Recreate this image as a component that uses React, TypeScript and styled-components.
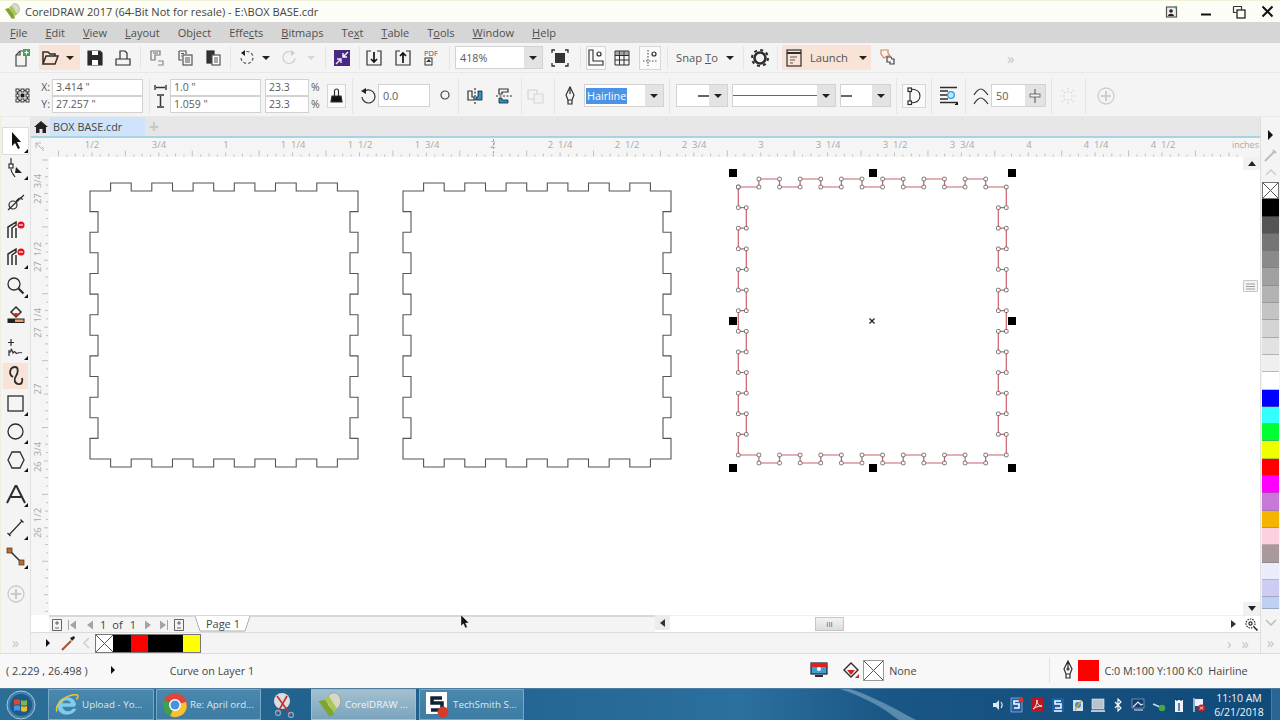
import React from "react";
import styled, { createGlobalStyle } from "styled-components";

const FONT = '"Open Sans", "Noto Sans", "Liberation Sans", sans-serif';

const Global = createGlobalStyle`
  html, body { margin: 0; padding: 0; background: #fff; overflow: hidden; }
  #root { width: 1280px; height: 720px; }
`;

const Page = styled.div`
  width: 1280px; height: 720px; display: flex; flex-direction: column; overflow: hidden;
  font-family: ${FONT}; color: #444; font-size: 11px; background: #f4f4f4; -webkit-font-smoothing: antialiased;
`;
const TitleBar = styled.header`
  height: 22px; flex: none; display: flex; align-items: center; background: #fdfdf7; border-top: 1px solid #f1f2d8; box-sizing: border-box; padding-left: 3px;
`;
const TitleText = styled.span` margin-left: 3px; font-size: 11.05px; color: #444; white-space: nowrap; flex: 1; `;
const WinBtn = styled.div<{ $w: number; $ml?: number }>` width: ${p => p.$w}px; height: 22px; margin-left: ${p => p.$ml ?? 0}px; display: flex; align-items: center; justify-content: center; flex: none; `;
const MenuBar = styled.nav` height: 21px; flex: none; display: flex; align-items: center; background: #d6d6d6; padding-left: 10px; gap: 18px; `;
const MenuItem = styled.span` font-size: 11px; color: #505050; white-space: nowrap; u { text-decoration: underline; text-underline-offset: 1px; } `;
const ToolRow = styled.div<{ $h: number; $pt?: number }>` height: ${p => p.$h}px; flex: none; display: flex; align-items: center; background: #f4f4f4; box-sizing: border-box; padding-top: ${p => p.$pt ?? 0}px; border-bottom: 1px solid #e9e9e9; position: relative; `;
const Grip = styled.div<{ $h?: number; $ml?: number }>`
  width: 5px; height: ${p => p.$h ?? 24}px; margin-left: ${p => p.$ml ?? 0}px; flex: none;
  background-image: radial-gradient(#c4c4c4 40%, transparent 45%); background-size: 2px 2px;
`;
const Slot = styled.div<{ $w?: number; $ml?: number }>`
  width: ${p => p.$w ?? 24}px; margin-left: ${p => p.$ml ?? 0}px; flex: none; display: flex; flex-direction: column; align-items: center; justify-content: center; gap: 3px;
`;
const Boxed = styled(Slot)` height: 24px; box-sizing: border-box; border: 1px solid #d6d6d6; background: #fafafa; `;
const Hot = styled.div<{ $w: number; $ml?: number }>`
  width: ${p => p.$w}px; margin-left: ${p => p.$ml ?? 0}px; height: 25px; flex: none; display: flex; align-items: center; background: #f8e3d6;
`;
const Sep = styled.div<{ $ml?: number }>` width: 1px; align-self: stretch; margin: 3px 0 2px ${p => p.$ml ?? 0}px; background: #e6e6e6; flex: none; `;
const Caret = styled.i<{ $ml?: number; $c?: string }>`
  width: 0; height: 0; flex: none; margin-left: ${p => p.$ml ?? 0}px; border-left: 4px solid transparent; border-right: 4px solid transparent; border-top: 4px solid ${p => p.$c ?? "#222"}; display: block;
`;
const Combo = styled.div<{ $w: number; $ml?: number; $h?: number }>`
  width: ${p => p.$w}px; height: ${p => p.$h ?? 23}px; margin-left: ${p => p.$ml ?? 0}px; flex: none; box-sizing: border-box; display: flex; align-items: center; background: #fff; border: 1px solid #d2d2d2; color: #5a5a5a; font-size: 10.8px;
`;
const ComboBody = styled.div<{ $pad?: number; $end?: boolean }>` flex: 1; min-width: 0; height: 100%; display: flex; align-items: center; padding-left: ${p => p.$pad ?? 4}px; justify-content: ${p => (p.$end ? "flex-end" : "flex-start")}; overflow: hidden; `;
const Drop = styled.div<{ $w?: number }>` width: ${p => p.$w ?? 18}px; height: 100%; flex: none; display: flex; align-items: center; justify-content: center; background: #e3e3e3; `;
const Selected = styled.span` background: #4a93e6; color: #fff; padding: 1px 1px; font-size: 10.8px; line-height: 14px; `;
const LineSample = styled.i<{ $w: number; $t?: number }>` display: block; width: ${p => p.$w}px; height: ${p => p.$t ?? 2}px; background: #666; `;
const Label = styled.span<{ $ml?: number }>` margin-left: ${p => p.$ml ?? 0}px; white-space: nowrap; font-size: 11.2px; color: #555; u { text-decoration: underline; } `;
const Stack = styled.div<{ $ml?: number; $w: number }>` width: ${p => p.$w}px; margin-left: ${p => p.$ml ?? 0}px; flex: none; display: flex; flex-direction: column; `;
const FieldRow = styled.div` display: flex; align-items: center; height: 17px; justify-content: flex-end; `;
const FieldTag = styled.span` margin-right: 2px; color: #555; font-size: 10.5px; `;
const Field = styled.div<{ $w: number }>` width: ${p => p.$w}px; height: 17px; box-sizing: border-box; border: 1px solid #d2d2d2; background: #fff; padding-left: 3px; font-size: 10.5px; line-height: 15px; color: #5a5a5a; flex: none; `;
const PctTag = styled.span` height: 17px; line-height: 17px; color: #5a5a5a; font-size: 10.5px; `;

const Workspace = styled.div` flex: none; height: 536px; display: flex; `;
const Toolbox = styled.aside`
  width: 31px; flex: none; box-sizing: border-box; display: flex; flex-direction: column; align-items: center; background: #f4f4f4; border-right: 1px solid #e2e2e2; border-left: 1px solid #eef0dc;
`;
const TopGrip = styled.div<{ $w: number }>`
  width: ${p => p.$w}px; height: 5px; margin-top: 2px; flex: none; background-image: radial-gradient(#c8c8c8 40%, transparent 45%); background-size: 2px 2px;
`;
const ToolSlot = styled.div<{ $mt: number; $on?: boolean; $sel?: boolean; $corner?: boolean }>`
  width: 25px; height: 26px; flex: none; margin-top: ${p => p.$mt}px; position: relative; display: flex; align-items: center; justify-content: center;
  background: ${p => (p.$on ? "#f8e3d6" : p.$sel ? "#fff" : "transparent")};
  box-shadow: ${p => (p.$sel ? "0 0 0 1px #dcdcdc" : "none")};
  &::after { content: ""; display: ${p => (p.$corner ? "block" : "none")}; position: absolute; right: 0; bottom: 1px; border-left: 4px solid transparent; border-bottom: 4px solid #111; }
`;
const BottomChev = styled.div` margin-top: auto; margin-bottom: 4px; height: 12px; color: #c4c4c4; font-size: 14px; line-height: 12px; `;
const Center = styled.section` width: 1229px; flex: none; display: flex; flex-direction: column; `;
const TabBar = styled.div` height: 19px; flex: none; display: flex; align-items: center; background: #e6e6e6; `;
const HomeCell = styled.div` width: 19px; flex: none; display: flex; justify-content: center; `;
const DocTab = styled.div` width: 95px; height: 19px; line-height: 19px; background: #cfe4fa; padding-left: 3px; box-sizing: border-box; font-size: 10.8px; color: #444; `;
const AddTab = styled.span` margin-left: 4px; font-size: 17px; line-height: 17px; color: #c8c8c8; font-weight: 700; `;
const RulerTop = styled.div` height: 21px; flex: none; border-top: 2px solid #a8d3e6; box-sizing: border-box; background: #f5f5f5; `;
const CanvasRow = styled.div` height: 458px; flex: none; display: flex; `;
const RulerLeft = styled.div` width: 18px; flex: none; background: #f5f5f5; `;
const Canvas = styled.div` width: 1194px; flex: none; background: #fff; `;
const VScroll = styled.div` width: 17px; flex: none; background: #fff; display: flex; flex-direction: column; align-items: stretch; `;
const ScrollBtn = styled.div<{ $mt?: number }>` height: 13px; margin-top: ${p => p.$mt ?? 0}px; background: #f1f1f1; display: flex; align-items: center; justify-content: center; flex: none; `;
const SideHandle = styled.div` height: 12px; width: 15px; margin-top: 110px; box-sizing: border-box; border: 1px solid #c8c8c8; border-radius: 1px; background: #f3f3f3; display: flex; align-items: center; justify-content: center; flex: none; `;
const HBar = styled.div` height: 17px; flex: none; display: flex; background: #fff; `;
const HGap = styled.div` width: 18px; flex: none; background: #fff; `;
const PageCtl = styled.div` width: 606px; flex: none; display: flex; align-items: center; background: #f4f4f4; border-top: 2px solid #d8d8d8; box-sizing: border-box; position: relative; `;
const PageNum = styled.span<{ $ml: number }>` margin-left: ${p => p.$ml}px; font-size: 11px; color: #444; flex: none; `;
const PageTab = styled.div`
  width: 56px; height: 15px; margin-left: 10px; margin-top: -2px; flex: none; position: relative; display: flex; align-items: center; justify-content: center; font-size: 11px; color: #444;
  svg { position: absolute; left: 0; top: 0; }
  span { position: relative; }
`;
const Pointer = styled.svg` position: absolute; left: 412px; top: -2px; z-index: 2; `;
const MiniGrip = styled(Grip)` margin-left: auto; height: 15px; `;
const ArrowCell = styled.div` width: 15px; height: 15px; flex: none; background: #ececec; display: flex; align-items: center; justify-content: center; `;
const HTrack = styled.div` flex: 1; display: flex; align-items: center; border-top: 1px solid #eee; box-sizing: border-box; `;
const Thumb = styled.div` width: 29px; height: 14px; margin-left: 145px; box-sizing: border-box; border: 1px solid #c6c6c6; background: linear-gradient(#f3f3f3, #dcdcdc); color: #666; font-size: 8px; line-height: 11px; text-align: center; flex: none; `;
const HEnd = styled.div` margin-left: auto; display: flex; align-items: center; gap: 8px; padding-right: 2px; `;
const DocPalette = styled.div` height: 21px; flex: none; display: flex; align-items: center; background: #f4f4f4; border-top: 1px solid #dcdcdc; box-sizing: border-box; `;
const Swatch = styled.div<{ $c: string }>` width: 17.4px; height: 17px; background: ${p => p.$c}; flex: none; box-sizing: border-box; `;
const SwatchRow = styled.div` display: flex; margin-left: 3px; border: 1px solid #777; box-sizing: border-box; `;
const Chev = styled.span<{ $ml?: number; $mr?: number; $auto?: boolean }>` color: #c4c4c4; font-size: 15px; line-height: 14px; margin-left: ${p => (p.$auto ? "auto" : `${p.$ml ?? 0}px`)}; margin-right: ${p => p.$mr ?? 0}px; flex: none; `;
const Palette = styled.aside` width: 20px; flex: none; box-sizing: border-box; display: flex; flex-direction: column; align-items: center; background: #f4f4f4; border-left: 1px solid #dedede; `;
const PalBtn = styled.div<{ $mt?: number }>` height: 14px; margin-top: ${p => p.$mt ?? 0}px; display: flex; align-items: center; justify-content: center; flex: none; `;
const ColorList = styled.div` width: 17px; margin-top: 3px; flex: none; display: flex; flex-direction: column; `;
const Color = styled.div<{ $c: string; $cut?: boolean; $framed?: boolean }>`
  width: 17px; height: ${p => (p.$cut ? 12 : 17.3)}px; flex: none; background: ${p => p.$c}; box-sizing: border-box;
  border: ${p => (p.$framed ? "1px solid #777" : "none")}; ${p => (p.$framed ? "" : "border-bottom: 1px solid rgba(120,120,120,.45);")}
`;
const StatusBar = styled.footer` height: 35px; flex: none; display: flex; align-items: center; background: #f8f8f8; border-top: 1px solid #dedede; box-sizing: border-box; padding: 0 0 2px 6px; `;
const StatusText = styled.span<{ $ml?: number }>` font-size: 10.8px; color: #444; white-space: nowrap; margin-left: ${p => p.$ml ?? 0}px; flex: none; `;
const PlayMark = styled.i<{ $ml?: number; $c?: string; $s?: number }>`
  width: 0; height: 0; flex: none; display: block; margin-left: ${p => p.$ml ?? 0}px; border-top: ${p => p.$s ?? 4}px solid transparent; border-bottom: ${p => p.$s ?? 4}px solid transparent; border-left: ${p => p.$s ?? 4}px solid ${p => p.$c ?? "#111"};
`;
const BigBox = styled.div<{ $c?: string; $ml?: number }>` width: 21px; height: 21px; margin-left: ${p => p.$ml ?? 0}px; flex: none; background: ${p => p.$c ?? "#fff"}; border: ${p => (p.$c ? "none" : "1px solid #999")}; box-sizing: border-box; display: flex; `;
const StatusSep = styled.div<{ $ml: number }>` width: 1px; height: 26px; margin-left: ${p => p.$ml}px; background: #e2e2e2; flex: none; `;
const Taskbar = styled.div`
  height: 32px; flex: none; display: flex; align-items: center; position: relative; overflow: hidden; border-top: 1px solid #4e7c9e; box-sizing: border-box;
  background: linear-gradient(90deg, #2b6f98 0%, #205f8c 30%, #2b709f 58%, #195585 70%, #104a78 100%);
`;
const Swoosh = styled.svg` position: absolute; left: 800px; top: 0; `;
const Orb = styled.div` width: 38px; height: 31px; flex: none; margin: 0 8px 0 2px; display: flex; align-items: center; justify-content: center; position: relative; `;
const TaskBtn = styled.div<{ $w: number; $ml?: number; $on?: boolean }>`
  width: ${p => p.$w}px; height: 31px; margin-left: ${p => p.$ml ?? 0}px; flex: none; box-sizing: border-box; display: flex; align-items: center; position: relative; gap: 2px; padding-left: 5px;
  border: 1px solid rgba(170,205,225,.5); color: ${p => (p.$on ? "#eef5f9" : "#dbe9f1")}; font-size: 9.8px; white-space: nowrap;
  background: ${p => (p.$on ? "linear-gradient(#a4c0d0, #7aa4bd)" : "linear-gradient(#4a88ad, #3d7ca3)")};
`;
const Tray = styled.div` margin-left: auto; display: flex; align-items: center; position: relative; `;
const TrayIcon = styled.div` width: 20.2px; display: flex; justify-content: center; flex: none; `;
const Clock = styled.div` width: 60px; text-align: center; color: #f2f6fa; font-size: 10.5px; line-height: 14px; flex: none; `;
const ShowDesk = styled.div` width: 8px; height: 31px; margin-left: 2px; border-left: 1px solid #4e7c9e; background: #2a6695; flex: none; `;

/* ---- drawings ---- */
type SP = { w?: number; h?: number; children?: React.ReactNode };
const S = ({ w = 20, h = 20, children }: SP) => (
  <svg width={w} height={h} viewBox={`0 0 ${w} ${h}`} fill="none" stroke="#2d2d2d" strokeWidth={1.2} style={{ display: "block", flex: "none" }}>{children}</svg>
);

const SEG = 268 / 13;
function boxPoints(x: number, y: number): [number, number][] {
  const pts: [number, number][] = [[x, y + 8]];
  for (let i = 0; i < 13; i++) { const yy = i % 2 ? y : y + 8; if (i) pts.push([x + i * SEG, yy]); pts.push([x + (i + 1) * SEG, yy]); }
  for (let i = 0; i < 13; i++) { const xx = i % 2 ? x + 260 : x + 268; if (i) pts.push([xx, y + 8 + i * SEG]); pts.push([xx, y + 8 + (i + 1) * SEG]); }
  for (let i = 0; i < 13; i++) { const yy = i % 2 ? y + 284 : y + 276; const a = x + 268 - i * SEG; if (i) pts.push([a, yy]); pts.push([a - SEG, yy]); }
  for (let i = 0; i < 13; i++) { const xx = i % 2 ? x + 8 : x; const a = y + 276 - i * SEG; if (i) pts.push([xx, a]); pts.push([xx, a - SEG]); }
  return pts;
}
const toD = (p: [number, number][]) => "M" + p.map(q => `${q[0].toFixed(1)} ${q[1].toFixed(1)}`).join("L") + "Z";

const CanvasArt = () => {
  const third = boxPoints(738.3, 179);
  const handles: [number, number][] = [[733, 173], [873, 173], [1012, 173], [733, 321], [1012, 321], [733, 468], [873, 468], [1012, 468]];
  return (
    <svg width={1194} height={458} style={{ display: "block" }}>
      <g transform="translate(-49 -157)" fill="none">
        <path d={toD(boxPoints(90, 183))} stroke="#555" strokeWidth={1.1} />
        <path d={toD(boxPoints(403, 183))} stroke="#555" strokeWidth={1.1} />
        <path d={toD(third)} stroke="#c9606c" strokeWidth={1.2} />
        {third.map((p, i) => <rect key={i} x={p[0] - 1.8} y={p[1] - 1.8} width={3.6} height={3.6} rx={1} fill="#fff" stroke="#555" strokeWidth={0.8} />)}
        {handles.map((p, i) => <rect key={i} x={p[0] - 4} y={p[1] - 4} width={8} height={8} fill="#000" />)}
        <path d="M869.500 318.500l5 5M874.500 318.500l-5 5" stroke="#222" strokeWidth={1.3} />
      </g>
    </svg>
  );
};

const hLabels: [number, string][] = [[92, "1/2"], [159, "3/4"], [226, "1"], [293, "1  1/4"], [360, "1  1/2"], [427, "1  3/4"], [493, "2"], [560, "2  1/4"], [627, "2  1/2"], [694, "2  3/4"], [761, "3"], [828, "3  1/4"], [895, "3  1/2"], [962, "3  3/4"], [1029, "4"], [1096, "4  1/4"], [1163, "4  1/2"]];
const tickLen = (i: number) => (i % 8 === 0 ? 6 : i % 4 === 0 ? 4 : i % 2 === 0 ? 3 : 2);
const HRuler = () => {
  const ticks: React.ReactNode[] = [];
  for (let i = 0; i < 148; i++) {
    const x = 58.5 + i * 8.36 - 31;
    if (x > 18 && x < 1212) ticks.push(<line key={i} x1={x} x2={x} y1={18.500} y2={18.500 - tickLen(i)} stroke="#b4b4b4" strokeWidth={0.8} />);
  }
  return (
    <svg width={1229} height={19} style={{ display: "block" }}>
      <g transform="translate(9 9)" stroke="#a4a4a4" strokeWidth={0.8}><path d="M-4-4h5M-4-4v5M-4-4l8 8M2 0l2 2" /></g>
      {ticks}
      <path d="M462.500 1v17" stroke="#888" strokeDasharray="2 2" strokeWidth={0.7} />
      {hLabels.map(([x, t]) => <text key={x} x={x - 31} y={9.500} fontSize={9.500} fill="#a8a8a8" textAnchor="middle" xmlSpace="preserve" fontFamily={FONT} stroke="none">{t}</text>)}
      <text x={1201} y={10} fontSize={9} fill="#a8a8a8" fontFamily={FONT}>inches</text>
    </svg>
  );
};
const vLabels: [number, string][] = [[189, "27  3/4"], [257, "27  1/2"], [323, "27  1/4"], [389, "27"], [457, "26  3/4"], [523, "26  1/2"]];
const VRuler = () => {
  const ticks: React.ReactNode[] = [];
  for (let i = 0; i < 56; i++) {
    const y = 3 + i * 8.36;
    ticks.push(<line key={i} y1={y} y2={y} x1={17} x2={17 - tickLen(i)} stroke="#b4b4b4" strokeWidth={0.8} />);
  }
  return (
    <svg width={18} height={458} style={{ display: "block" }}>
      {ticks}
      {vLabels.map(([y, t]) => <text key={y} transform={`translate(10 ${y - 157}) rotate(-90)`} fontSize={9.500} fill="#a8a8a8" textAnchor="middle" xmlSpace="preserve" fontFamily={FONT}>{t}</text>)}
    </svg>
  );
};

const CorelLogo = ({ s = 17 }: { s?: number }) => (
  <svg width={s} height={s} viewBox="0 0 17 17" style={{ display: "block", flex: "none" }}>
    <ellipse cx="11" cy="6" rx="4.500" ry="5.500" fill="#d8d8c8" stroke="#9a9a8a" strokeWidth=".5" />
    <path d="M1 6l7 10 3-1-1-3-5-7z" fill="#7ea52c" />
    <path d="M5 4l6 9 2-2-5-8z" fill="#a8c850" />
  </svg>
);

const Fan = () => <S w={20} h={20}><path d="M2 18V7l8-5v3l-4 3v10M6 18V9M10 18V8" strokeWidth={1.500} /><circle cx="15" cy="5" r="3.500" fill="#e01020" stroke="none" /><path d="M13 5h4" stroke="#fff" /></S>;

const tools: { mt: number; on?: boolean; sel?: boolean; corner?: boolean; art: React.ReactNode }[] = [
  { mt: 4, sel: true, corner: true, art: <S w={20} h={20}><path d="M6 1l0 14 3-3 3 6 2-1-3-6 4 0z" fill="#111" stroke="none" /></S> },
  { mt: 1, corner: true, art: <S w={20} h={22}><path d="M5 1v6M5 12c0 4 3 6 4 8" /><rect x="3" y="7" width="4" height="4" fill="#fff" /><path d="M10 10l6 6-7 0z" fill="#222" stroke="none" /></S> },
  { mt: 8, art: <S w={20} h={20}><circle cx="7" cy="13" r="4" /><path d="M2 18L18 3M10 9c2-1 2-3 4-3s1 2 3 1" /></S> },
  { mt: 2, art: <Fan /> },
  { mt: 1, corner: true, art: <Fan /> },
  { mt: 3, corner: true, art: <S w={20} h={20}><circle cx="8" cy="8" r="6" strokeWidth={1.300} /><path d="M12.500 12.500l5 5" strokeWidth={2.200} /></S> },
  { mt: 3, art: <S w={20} h={20}><path d="M10 2l5 5-5 5-5-5z" strokeWidth={1.500} /><path d="M6 9l4 3 4-3-4-1z" fill="#b83010" stroke="none" /><rect x="2" y="14" width="16" height="3.500" fill="#e8a070" stroke="#222" strokeWidth={1} /><path d="M2 14h7v3.500H2z" fill="#222" stroke="none" /></S> },
  { mt: 7, corner: true, art: <S w={20} h={20}><path d="M5 1v7M2 4.500h6M3 18v-6c0 3 2 3 2 0s2 3 2 3 1-2 2-1 1 2 3 1 2-1 4 0" /></S> },
  { mt: 2, on: true, art: <S w={20} h={22}><path d="M7 12C2 9 4 2 9 2c4 0 3 6 1 9s-2 7 2 8 5-3 4-6" strokeWidth={1.800} /></S> },
  { mt: 2, corner: true, art: <S w={20} h={20}><rect x="2" y="2" width="15" height="15" strokeWidth={1.300} /></S> },
  { mt: 2, corner: true, art: <S w={20} h={20}><circle cx="9.500" cy="9.500" r="7.500" strokeWidth={1.300} /></S> },
  { mt: 2, corner: true, art: <S w={20} h={20}><path d="M6 2h8l4 8-4 8H6l-4-8z" strokeWidth={1.300} /></S> },
  { mt: 9, corner: true, art: <S w={22} h={22}><path d="M2 19L10.500 2h1L20 19M6 13h10" strokeWidth={2} /></S> },
  { mt: 7, corner: true, art: <S w={20} h={20}><path d="M3 17L16 3M1.500 15l3 3M14.500 1.500l3 3" /></S> },
  { mt: 3, corner: true, art: <S w={20} h={20}><path d="M4 4l12 12" strokeWidth={1.500} /><rect x="1" y="1" width="5" height="5" fill="#c46a24" stroke="#333" strokeWidth={.7} /><rect x="13" y="13" width="5" height="5" fill="#c46a24" stroke="#333" strokeWidth={.7} /></S> },
  { mt: 11, art: <S w={20} h={20}><circle cx="10" cy="10" r="8" stroke="#c8c8c8" strokeWidth={1.300} /><path d="M10 5v10M5 10h10" stroke="#c8c8c8" strokeWidth={2} /></S> },
];

const paletteColors = ["#000", "#555", "#757575", "#8a8a8a", "#a0a0a0", "#b3b3b3", "#c4c4c4", "#d4d4d4", "#e2e2e2", "#efefef", "#fff", "#0000ff", "#33ffff", "#00ff33", "#eeff00", "#ff0000", "#ff00ff", "#c878d8", "#f5b400", "#fdd0e0", "#a89a9a", "#ebebfb", "#ccccf4"];

const CrossFill = ({ w, h }: { w: number; h: number }) => (
  <svg width={w} height={h} style={{ display: "block" }}><path d={`M0 0L${w} ${h}M${w} 0L0 ${h}`} stroke="#555" strokeWidth={1} /></svg>
);
const PenIcon = () => <S w={12} h={20}><path d="M6 1l-4 8 2 5h4l2-5zM6 1v7M4 14v4h4v-4" /><circle cx="6" cy="9" r="1" /></S>;
const AddPage = () => <S w={12} h={14}><path d="M1.500 1.500h9v11h-9zM4 5h4M6 3v4M4 10h4" stroke="#555" strokeWidth={.9} /></S>;
const Tri = ({ d, c = "#a4a4a4", bar }: { d: "l" | "r"; c?: string; bar?: boolean }) => (
  <svg width={12} height={12} style={{ display: "block", flex: "none" }}>
    <path d={d === "l" ? "M9 1.500L3 6l6 4.500z" : "M3 1.500L9 6l-6 4.500z"} fill={c} />
    {bar && <path d={d === "l" ? "M1.500 1v10" : "M10.500 1v10"} stroke={c} />}
  </svg>
);
const TinyCaret = ({ up, c = "#222" }: { up?: boolean; c?: string }) => (
  <svg width={8} height={5} style={{ display: "block" }}><path d={up ? "M0 5L4 0l4 5z" : "M0 0L8 0 4 5z"} fill={c} /></svg>
);
const OriginIcon = () => (
  <S w={15} h={17}>
    <g strokeWidth={.9} stroke="#222">
      {[1, 6, 11].map(y => [1, 6, 11].map(x => <rect key={`${x}-${y}`} x={x} y={y + 1} width={3} height={3} fill={x === 6 && y === 6 ? "#111" : "#fff"} />))}
      <path d="M4 3.500h2M9 3.500h2M4 13.500h2M9 13.500h2M2.500 5v2M12.500 5v2M2.500 10v2M12.500 10v2" />
    </g>
  </S>
);

const TrayArt = [
  <S w={14} h={14} key="a"><path d="M3 5h3l3-3v10L6 9H3z" fill="#dfe8ef" stroke="none" /><path d="M11 4c1.500 2 1.500 4 0 6" stroke="#dfe8ef" /></S>,
  <S w={14} h={16} key="b"><rect x="1" y="1" width="11" height="14" fill="#1b5fa8" stroke="#dfe8ef" strokeWidth=".5" /><path d="M9 4H4v3h5v4H4" stroke="#fff" strokeWidth={1.600} /><circle cx="11" cy="3" r="2.500" fill="#e03030" stroke="none" /></S>,
  <S w={14} h={16} key="c"><rect x="1" y="1" width="12" height="14" fill="#b81820" stroke="none" /><path d="M3 12c3-2 4-6 4-9 0 4 2 6 5 6-4 0-6 1-9 3z" stroke="#fff" strokeWidth=".9" /></S>,
  <S w={14} h={16} key="d"><rect x="1" y="1" width="12" height="14" fill="#1b5fa8" stroke="none" /><path d="M10 4H4v3h6v4H4M3 14h8" stroke="#fff" strokeWidth={1.500} /></S>,
  <S w={14} h={16} key="e"><path d="M2 3h8l2 2v9H2z" fill="#cfe0ee" stroke="none" /><circle cx="7" cy="8" r="3" fill="#3e8ed0" stroke="none" /><path d="M4 13l6-9" stroke="#d8a030" strokeWidth={1.500} /></S>,
  <S w={16} h={16} key="f"><rect x="2" y="2" width="12" height="10" fill="#b8c4cc" stroke="#eef" strokeWidth=".6" /><path d="M1 14h14" stroke="#eef" strokeWidth={1.500} /></S>,
  <S w={10} h={14} key="g"><path d="M2 4l6 6-3 3V1l3 3-6 6" stroke="#fff" strokeWidth={1.100} /></S>,
  <S w={16} h={14} key="h"><rect x="2" y="1" width="12" height="9" fill="#123a70" stroke="#ccd" strokeWidth=".5" /><path d="M3 9l5-5 3 3 2-1M4 12h9" stroke="#dfe8ef" /></S>,
  <S w={16} h={14} key="i"><path d="M2 6l7 3" stroke="#cdd" strokeWidth={1.600} /><circle cx="11" cy="10" r="3.200" fill="#45a845" stroke="none" /></S>,
  <S w={14} h={16} key="j"><path d="M3 3h8v12H3z" fill="#eef2f5" stroke="none" /><path d="M5 1v3M9 1v3M7 6v8" stroke="#123a70" strokeWidth={1.200} /></S>,
  <S w={14} h={16} key="k"><path d="M2 1v14" stroke="#eef" /><path d="M3 2h8v7H3z" fill="#eef" stroke="none" /><circle cx="9.500" cy="11" r="3.500" fill="#c82020" stroke="none" /><path d="M8 9.500l3 3m0-3l-3 3" stroke="#fff" strokeWidth=".9" /></S>,
];

export default function App() {
  return (
    <Page>
      <Global />
      <TitleBar>
        <Slot $w={19}><CorelLogo /></Slot>
        <TitleText>CorelDRAW 2017 (64-Bit Not for resale) - E:\BOX BASE.cdr</TitleText>
        <WinBtn $w={20}><S w={14} h={14}><rect x="1.500" y="2" width="10" height="10" fill="#eee" stroke="#555" /><circle cx="6" cy="6" r="1.800" fill="#222" stroke="none" /><path d="M3 11c0-3 6-3 6 0" fill="#222" stroke="none" /><path d="M11 1v3" stroke="#3aa040" /></S></WinBtn>
        <WinBtn $w={20} $ml={14}><S w={12} h={10}><path d="M1 7.500h10" strokeWidth={2} stroke="#111" /></S></WinBtn>
        <WinBtn $w={20} $ml={13}><S w={14} h={14}><path d="M1.500 1.500h8v3M1.500 1.500v6h3" stroke="#333" /><rect x="5" y="5" width="8" height="8" stroke="#111" /></S></WinBtn>
        <WinBtn $w={20} $ml={8}><S w={13} h={13}><path d="M1.500 1.500l10 10M11.500 1.500l-10 10" stroke="#111" strokeWidth={2} /></S></WinBtn>
        <WinBtn $w={3} />
      </TitleBar>
      <MenuBar>
        <MenuItem><u>F</u>ile</MenuItem><MenuItem><u>E</u>dit</MenuItem><MenuItem><u>V</u>iew</MenuItem><MenuItem><u>L</u>ayout</MenuItem>
        <MenuItem>Ob<u>j</u>ect</MenuItem><MenuItem>Effe<u>c</u>ts</MenuItem><MenuItem><u>B</u>itmaps</MenuItem><MenuItem>Te<u>x</u>t</MenuItem>
        <MenuItem><u>T</u>able</MenuItem><MenuItem>T<u>o</u>ols</MenuItem><MenuItem><u>W</u>indow</MenuItem><MenuItem><u>H</u>elp</MenuItem>
      </MenuBar>
      <ToolRow $h={30}>
        <Grip />
        <Slot $ml={5}><S w={20} h={20}><path d="M4 18V7l4-4h6v15z" stroke="#444" /><path d="M8 3v4H4" stroke="#444" /><rect x="11" y="1" width="7" height="7" fill="#3aa850" stroke="none" /><path d="M14.500 2.500v4M12.500 4.500h4" stroke="#fff" strokeWidth={1.200} /></S></Slot>
        <Hot $w={41} $ml={5}>
          <Slot $w={22}><S w={18} h={18}><path d="M2 15V3h5l2 2h5v2M2 15L5 7h12l-3 8z" strokeWidth={1.500} /></S></Slot>
          <Caret $ml={5} />
        </Hot>
        <Slot $ml={3}><S w={18} h={18}><path d="M2 2h12l2 2v12H2z" fill="#2a2a2a" /><rect x="6" y="2" width="6" height="4" fill="#fff" stroke="none" /><rect x="6" y="11" width="6" height="5" fill="#fff" stroke="none" /></S></Slot>
        <Slot $ml={4}><S w={20} h={20}><path d="M7 11V3h5l2 2v6M3 11h14v6H3z" strokeWidth={1.200} /></S></Slot>
        <Sep $ml={5} />
        <Slot $ml={4}><S w={18} h={18}><path d="M3 2h9v4H7v5H3z" stroke="#777" /><path d="M5 4h5" stroke="#777" /><path d="M10 12h5v4h-5" stroke="#888" /></S></Slot>
        <Slot $ml={4}><S w={18} h={18}><path d="M3 2h7v3M3 2v9h3M5 4.500h3M5 7h1" stroke="#555" /><rect x="7" y="6" width="9" height="10" stroke="#555" /><path d="M9 9h5M9 11h5M9 13h5" stroke="#555" /></S></Slot>
        <Slot $ml={4}><S w={18} h={18}><rect x="3" y="2" width="7" height="12" fill="#333" /><rect x="8" y="6" width="8" height="10" fill="#fff" stroke="#555" /><path d="M10 9h4M10 11h4M10 13h4" stroke="#555" /></S></Slot>
        <Sep $ml={5} />
        <Slot $ml={3}><S w={18} h={18}><path d="M4 9a6 6 0 1 0 2-5" strokeDasharray="3 2" stroke="#555" /><path d="M8 1L4 4l4 3z" fill="#222" stroke="none" /></S></Slot>
        <Slot $ml={2} $w={12}><Caret /></Slot>
        <Slot $ml={6}><S w={18} h={18}><path d="M14 9a6 6 0 1 1-2-5" stroke="#ccc" /><path d="M10 1l4 3-4 3z" fill="#ccc" stroke="none" /></S></Slot>
        <Slot $ml={3} $w={12}><Caret $c="#d6d6d6" /></Slot>
        <Sep $ml={8} />
        <Slot $ml={4}><S w={18} h={18}><rect x="1" y="1" width="16" height="16" fill="#4a2a80" stroke="none" /><path d="M15 3L10 8M10 4v4h4" stroke="#fff" strokeWidth={1.400} /><path d="M3 15l5-5M4 10h4v4" stroke="#f0e8f8" strokeWidth={1.400} /></S></Slot>
        <Sep $ml={5} />
        <Slot $ml={2}><S w={18} h={18}><path d="M6 2H2v14h14V2h-4" stroke="#333" /><path d="M9 3v10M6 10l3 3 3-3" strokeWidth={1.700} stroke="#111" /></S></Slot>
        <Slot $ml={5}><S w={18} h={18}><path d="M6 2H2v14h14V2h-4" stroke="#333" /><path d="M9 14V4M6 7l3-3 3 3" strokeWidth={1.700} stroke="#111" /></S></Slot>
        <Slot $ml={5}><svg width={18} height={20} style={{ display: "block" }}><text x={1} y={8} fontSize={7.500} fill="#555" fontFamily={FONT}>PDF</text><rect x="2" y="10" width="7" height="7" fill="none" stroke="#333" /><path d="M3 14l3-3 2 3z" fill="#333" /></svg></Slot>
        <Sep $ml={5} />
        <Combo $w={88} $ml={5}><ComboBody>418%</ComboBody><Drop><Caret /></Drop></Combo>
        <Slot $ml={5}><S w={20} h={20}><rect x="5" y="5" width="10" height="10" fill="#333" stroke="none" /><path d="M2 5V2h3M15 2h3v3M18 15v3h-3M5 18H2v-3" strokeWidth={1.300} /></S></Slot>
        <Sep $ml={8} />
        <Boxed $w={20} $ml={5}><S w={18} h={20}><path d="M2 2v15h14v-4H6V2z" strokeWidth={1.100} /><circle cx="12" cy="6" r="2" /></S></Boxed>
        <Slot $ml={4}><S w={18} h={18}><path d="M2 2h14v14H2zM6.500 2v14M11 2v14M2 6.500h14M2 11h14" strokeWidth={1} /><rect x="2" y="2" width="14" height="4" fill="#555" stroke="none" opacity=".5" /></S></Slot>
        <Boxed $w={22} $ml={5}><S w={18} h={20}><path d="M7 2v16M2 13h14" strokeDasharray="1.500 1.500" stroke="#555" /><circle cx="13" cy="6" r="2" /></S></Boxed>
        <Sep $ml={6} />
        <Label $ml={8}>Snap <u>T</u>o</Label>
        <Caret $ml={8} />
        <Sep $ml={9} />
        <Slot $ml={4}><S w={20} h={20}><circle cx="10" cy="10" r="5.500" strokeWidth={2.600} /><circle cx="10" cy="10" r="8" strokeWidth={2} strokeDasharray="3 3.280" /></S></Slot>
        <Sep $ml={5} />
        <Hot $w={89} $ml={4}>
          <Slot $w={24}><S w={18} h={20}><rect x="2" y="2" width="14" height="16" /><path d="M2 5h14" strokeWidth={2} /><path d="M5 9h7M5 12h5M5 15h3" stroke="#555" /></S></Slot>
          <Label $ml={4}>Launch</Label>
          <Caret $ml={11} />
        </Hot>
        <Slot $ml={4}><S w={18} h={20}><path d="M3 2h7v3l2 3H9L6 10 3 6z" stroke="#e08050" /><path d="M9 9h4l1 2 2 0v5h-4v-2H9z" stroke="#444" /></S></Slot>
        <Chev $ml={108}>»</Chev>
      </ToolRow>
      <ToolRow $h={44} $pt={2}>
        <Grip $h={38} />
        <Slot $w={16} $ml={9}><OriginIcon /></Slot>
        <Stack $w={105} $ml={8}>
          <FieldRow><FieldTag>X:</FieldTag><Field $w={91}>3.414 "</Field></FieldRow>
          <FieldRow><FieldTag>Y:</FieldTag><Field $w={91}>27.257 "</Field></FieldRow>
        </Stack>
        <Sep $ml={6} />
        <Slot $w={13} $ml={4}>
          <S w={13} h={7}><path d="M1 1v5M12 1v5M2 3.500h9" stroke="#333" strokeWidth={1.400} /></S>
          <S w={11} h={14}><path d="M2 1h7M2 13h7M5.500 2v10" stroke="#333" strokeWidth={1.500} /></S>
        </Slot>
        <Stack $w={91} $ml={3}><Field $w={91}>1.0 "</Field><Field $w={91}>1.059 "</Field></Stack>
        <Stack $w={44} $ml={4}><Field $w={44}>23.3</Field><Field $w={44}>23.3</Field></Stack>
        <Stack $w={13} $ml={2}><PctTag>%</PctTag><PctTag>%</PctTag></Stack>
        <Boxed $w={19} $ml={3}><S w={13} h={18}><path d="M4.500 9V4a2 2 0 0 1 4 0v5" /><path d="M2 9h9l1 6H1z" fill="#111" /></S></Boxed>
        <Sep $ml={6} />
        <Slot $w={18} $ml={6}><S w={18} h={18}><path d="M6 4a6.500 6.500 0 1 1-3 6" stroke="#333" /><path d="M7 1v6L2 4z" fill="#222" stroke="none" /></S></Slot>
        <Combo $w={52} $ml={1}><ComboBody>0.0</ComboBody></Combo>
        <Slot $w={18} $ml={6}><S w={12} h={12}><circle cx="6" cy="5" r="4" stroke="#444" /></S></Slot>
        <Sep $ml={4} />
        <Slot $ml={4}><S w={18} h={18}><path d="M2 4h4v6h2v3H2z" stroke="#333" /><path d="M9 1v16" strokeDasharray="2 1.500" /><path d="M16 4h-4v6h-2v3h6z" fill="#2e93bf" stroke="#123" strokeWidth=".8" /></S></Slot>
        <Slot $ml={5}><S w={18} h={18}><path d="M4 2h9v3H7v2H4z" stroke="#333" /><path d="M1 9h16" strokeDasharray="2 1.500" /><path d="M4 16h9v-3H7v-2H4z" fill="#2e93bf" stroke="#123" strokeWidth=".8" /></S></Slot>
        <Sep $ml={5} />
        <Slot $ml={2}><S w={18} h={18}><path d="M1 3h9v9H1z" stroke="#d2d2d2" /><path d="M7 7h9v9H7z" stroke="#d8d8d8" fill="#f1f1f1" /></S></Slot>
        <Sep $ml={6} />
        <Slot $ml={3}><S w={12} h={20}><path d="M6 1l-4 8 2 5h4l2-5z" stroke="#333" /><path d="M6 1v7M4 14v4h4v-4" /></S></Slot>
        <Combo $w={80} $ml={2}><ComboBody $pad={1}><Selected>Hairline</Selected></ComboBody><Drop><Caret /></Drop></Combo>
        <Sep $ml={5} />
        <Combo $w={52} $ml={6}><ComboBody $end><LineSample $w={11} /></ComboBody><Drop><Caret /></Drop></Combo>
        <Combo $w={104} $ml={4}><ComboBody $pad={0}><LineSample $w={85} $t={1} /></ComboBody><Drop><Caret /></Drop></Combo>
        <Combo $w={51} $ml={4}><ComboBody $pad={0}><LineSample $w={11} /></ComboBody><Drop><Caret /></Drop></Combo>
        <Sep $ml={5} />
        <Boxed $ml={5} $w={24}><S w={18} h={20}><path d="M5 3c8 0 10 3 10 7s-3 7-10 7M5 3v14" strokeWidth={1.100} /><rect x="3" y="2" width="3.500" height="3.500" fill="#fff" /><rect x="3" y="15" width="3.500" height="3.500" fill="#fff" /></S></Boxed>
        <Sep $ml={5} />
        <Slot $ml={5}><S w={22} h={22}><path d="M2 2.500h17M2 6h8M2 10h8M2 14h8M2 17.500h17" strokeWidth={1.400} /><circle cx="13" cy="10" r="3.300" fill="#bfe6f7" stroke="#29a0d8" strokeWidth={1.300} /><path d="M20 20h-3.500l3.500-3.500z" fill="#111" stroke="none" /></S></Slot>
        <Sep $ml={4} />
        <Slot $ml={5} $w={19}><S w={18} h={20}><path d="M2 9c3-5 5-6 7-6s4 2 7 6M2 18c3-5 5-6 7-6s4 2 7 6" strokeWidth={1.200} /></S></Slot>
        <Combo $w={55} $ml={1}><ComboBody>50</ComboBody><Drop $w={20}><S w={14} h={14}><path d="M7 0v14" stroke="#666" /><rect x="2" y="5" width="10" height="3" fill="#f2f2f2" stroke="#555" strokeWidth=".8" /></S></Drop></Combo>
        <Sep $ml={5} />
        <Slot $ml={4}><S w={18} h={18}><path d="M3 3l4 4M15 3l-4 4M3 15l4-4M15 15l-4-4M9 1v5M9 12v5M1 9h5M12 9h5" stroke="#d2d2d2" strokeDasharray="1.500 1.500" /></S></Slot>
        <Sep $ml={5} />
        <Slot $ml={8}><S w={20} h={20}><circle cx="10" cy="10" r="8" stroke="#cdcdcd" strokeWidth={1.300} /><path d="M10 5v10M5 10h10" stroke="#cdcdcd" strokeWidth={2} /></S></Slot>
      </ToolRow>
      <Workspace>
        <Toolbox>
          <TopGrip $w={27} />
          {tools.map((t, i) => (
            <ToolSlot key={i} $mt={t.mt} $on={t.on} $sel={t.sel} $corner={t.corner}>{t.art}</ToolSlot>
          ))}
          <BottomChev>»</BottomChev>
        </Toolbox>
        <Center>
          <TabBar>
            <HomeCell><S w={14} h={13}><path d="M7 1L0 7h2v6h3.500V9h3v4H12V7h2z" fill="#222" stroke="none" /></S></HomeCell>
            <DocTab>BOX BASE.cdr</DocTab>
            <AddTab>+</AddTab>
          </TabBar>
          <RulerTop><HRuler /></RulerTop>
          <CanvasRow>
            <RulerLeft><VRuler /></RulerLeft>
            <Canvas><CanvasArt /></Canvas>
            <VScroll>
              <ScrollBtn><TinyCaret up /></ScrollBtn>
              <SideHandle><S w={9} h={7}><path d="M0 1h9M0 3.500h9M0 6h9" stroke="#888" strokeWidth={.8} /></S></SideHandle>
              <ScrollBtn $mt={310}><TinyCaret /></ScrollBtn>
            </VScroll>
          </CanvasRow>
          <HBar>
            <HGap />
            <PageCtl>
              <Slot $w={12} $ml={2}><AddPage /></Slot>
              <Slot $w={12} $ml={4}><Tri d="l" bar /></Slot>
              <Slot $w={12} $ml={5}><Tri d="l" /></Slot>
              <PageNum $ml={4}>1</PageNum><PageNum $ml={6}>of</PageNum><PageNum $ml={7}>1</PageNum>
              <Slot $w={12} $ml={6}><Tri d="r" /></Slot>
              <Slot $w={12} $ml={3}><Tri d="r" bar /></Slot>
              <Slot $w={12} $ml={4}><AddPage /></Slot>
              <PageTab>
                <svg width={56} height={16}><path d="M0 0L5 15H50L55 0" fill="#fff" stroke="#9a9a9a" strokeWidth={.8} /></svg>
                <span>Page 1</span>
              </PageTab>
              <MiniGrip />
              <Pointer width={9} height={14} viewBox="0 0 9 14"><path d="M0 0v11l2.500-2.200L4.300 13l2-.8-1.800-4.200H8z" fill="#111" stroke="#fff" strokeWidth=".4" /></Pointer>
            </PageCtl>
            <ArrowCell><svg width={6} height={8}><path d="M5 0v8L0 4z" fill="#333" /></svg></ArrowCell>
            <HTrack>
              <Thumb>III</Thumb>
              <HEnd>
                <svg width={6} height={8}><path d="M0 0v8l5-4z" fill="#333" /></svg>
                <S w={13} h={13}><circle cx="5.500" cy="5.500" r="4.500" strokeDasharray="1.500 1" /><circle cx="5.500" cy="5.500" r="1.600" /><path d="M9 9l3.500 3.500" strokeWidth={1.600} /></S>
              </HEnd>
            </HTrack>
          </HBar>
          <DocPalette>
            <Grip $h={16} $ml={2} />
            <PlayMark $ml={8} />
            <Slot $w={20} $ml={8}><S w={16} h={18}><path d="M2 16l9-9" stroke="#a0522d" strokeWidth={2} /><path d="M10 4l4-2 1 2-3 3z" fill="#222" stroke="none" /></S></Slot>
            <Slot $w={12} $ml={2}><svg width={7} height={12}><path d="M6 1L1 6l5 5" fill="none" stroke="#d0d0d0" strokeWidth={1.600} /></svg></Slot>
            <SwatchRow>
              <Swatch $c="#fff"><CrossFill w={17} h={17} /></Swatch>
              <Swatch $c="#000" /><Swatch $c="#ff0000" /><Swatch $c="#000" /><Swatch $c="#000" /><Swatch $c="#ffff00" />
            </SwatchRow>
            <Chev $auto>›</Chev><Chev $ml={10} $mr={11}>»</Chev>
          </DocPalette>
        </Center>
        <Palette>
          <TopGrip $w={14} />
          <PalBtn $mt={4}><PlayMark $s={5} /></PalBtn>
          <PalBtn $mt={6}><S w={16} h={16}><path d="M2 14l9-9M10 3l3 3" stroke="#bdbdbd" strokeWidth={2} /></S></PalBtn>
          <PalBtn $mt={3}><svg width={12} height={7}><path d="M1 6l5-5 5 5" fill="none" stroke="#cfcfcf" strokeWidth={1.600} /></svg></PalBtn>
          <ColorList>
            <Color $c="#fff" $framed><CrossFill w={15} h={15} /></Color>
            {paletteColors.map((c, i) => <Color key={i} $c={c} />)}
            <Color $c="#c0d0f4" $cut />
          </ColorList>
          <PalBtn $mt={6}><svg width={12} height={7}><path d="M1 1l5 5 5-5" fill="none" stroke="#bfbfbf" strokeWidth={1.600} /></svg></PalBtn>
          <PalBtn $mt={6}><Chev>»</Chev></PalBtn>
        </Palette>
      </Workspace>
      <StatusBar>
        <StatusText>( 2.229 , 26.498 )</StatusText>
        <PlayMark $ml={23} $s={4} />
        <StatusText $ml={55}>Curve on Layer 1</StatusText>
        <Slot $w={18} $ml={556}><S w={18} h={18}><rect x="1" y="2" width="16" height="11" fill="#3aa0d8" stroke="#222" /><rect x="1" y="2" width="16" height="4" fill="#e02020" stroke="none" /><circle cx="9" cy="8" r="2" fill="#fff" stroke="none" /><path d="M5 15h8" strokeWidth={2} /></S></Slot>
        <Slot $w={18} $ml={14}><S w={18} h={18}><path d="M9 2l7 7-7 7-7-7z" strokeWidth={1.400} /><path d="M5 9h8l-4 5z" fill="#d02020" stroke="none" /><path d="M17 17h-4l4-4z" fill="#d02020" stroke="none" /></S></Slot>
        <BigBox $ml={3}><CrossFill w={19} h={19} /></BigBox>
        <StatusText $ml={5}>None</StatusText>
        <StatusSep $ml={133} />
        <Slot $w={12} $ml={12}><PenIcon /></Slot>
        <BigBox $c="#ff0000" $ml={4} />
        <StatusText $ml={5}>C:0 M:100 Y:100 K:0&nbsp; Hairline</StatusText>
      </StatusBar>
      <Taskbar>
        <Swoosh width={160} height={32}><path d="M50 0C75 8 95 20 118 32H100C85 20 65 8 40 0z" fill="#8fb6cc" opacity=".55" /></Swoosh>
        <Orb>
          <svg width={30} height={30} viewBox="0 0 30 30" style={{ display: "block" }}>
            <circle cx="15" cy="15" r="14" fill="#3f7ea8" stroke="#a9c8dc" />
            <circle cx="15" cy="15" r="11" fill="#1d5a88" />
            <path d="M8 10c2-1 4-1 6 0v5c-2-1-4-1-6 0z" fill="#e0442a" /><path d="M15 10c2 1 4 1 6 0v5c-2 1-4 1-6 0z" fill="#7ab648" /><path d="M8 16c2-1 4-1 6 0v5c-2-1-4-1-6 0z" fill="#3f9ae0" /><path d="M15 16c2 1 4 1 6 0v5c-2 1-4 1-6 0z" fill="#f2bc1e" />
          </svg>
        </Orb>
        <TaskBtn $w={106}>
          <svg width={26} height={26} viewBox="0 0 28 26" style={{ display: "block", flex: "none" }}><path d="M22 15H9c1 6 9 6 11 2h4c-3 9-20 9-20-3 0-10 15-13 19-4 1 2 1 3-1 5zM9 11h9c-1-4-8-4-9 0z" fill="#7ccdf0" /><path d="M3 20C1 12 12 2 24 2c3 0 2 3 0 5" fill="none" stroke="#f2c230" strokeWidth={1.600} /></svg>
          Upload - Yo...
        </TaskBtn>
        <TaskBtn $w={105} $ml={2}>
          <svg width={26} height={26} viewBox="0 0 26 26" style={{ display: "block", flex: "none" }}>
            <circle cx="13" cy="13" r="12" fill="#d9483a" /><path d="M13 13l-5 11a12 12 0 0 0 16-6 12 12 0 0 0 0-8z" fill="#f4c430" /><path d="M13 13L8 24A12 12 0 0 1 2 8z" fill="#3ba14d" /><circle cx="13" cy="13" r="6" fill="#fff" /><circle cx="13" cy="13" r="4.500" fill="#4b8fe0" />
          </svg>
          Re: April ord...
        </TaskBtn>
        <Slot $w={50}><svg width={26} height={26} viewBox="0 0 26 26" style={{ display: "block" }}><circle cx="9" cy="9" r="8" fill="#ddd" /><path d="M4 4l13 18M14 4L5 20" stroke="#c03038" strokeWidth={1.600} fill="none" /><circle cx="5" cy="21" r="2.500" fill="none" stroke="#8fa8b8" strokeWidth={1.300} /><circle cx="18" cy="23" r="2.500" fill="none" stroke="#8fa8b8" strokeWidth={1.300} /></svg></Slot>
        <TaskBtn $w={105} $on><CorelLogo s={26} />CorelDRAW ...</TaskBtn>
        <TaskBtn $w={105} $ml={3}>
          <svg width={26} height={28} viewBox="0 0 26 28" style={{ display: "block", flex: "none" }}><rect x="1" y="1" width="21" height="22" fill="#fff" /><path d="M17 7H7v5h10v7H6" fill="none" stroke="#123" strokeWidth={3.500} /><circle cx="18" cy="21" r="5.500" fill="#d83a2a" /></svg>
          TechSmith S...
        </TaskBtn>
        <Tray>
          {TrayArt.map((a, i) => <TrayIcon key={i}>{a}</TrayIcon>)}
          <Clock>11:10 AM<br />6/21/2018</Clock>
          <ShowDesk />
        </Tray>
      </Taskbar>
    </Page>
  );
}
